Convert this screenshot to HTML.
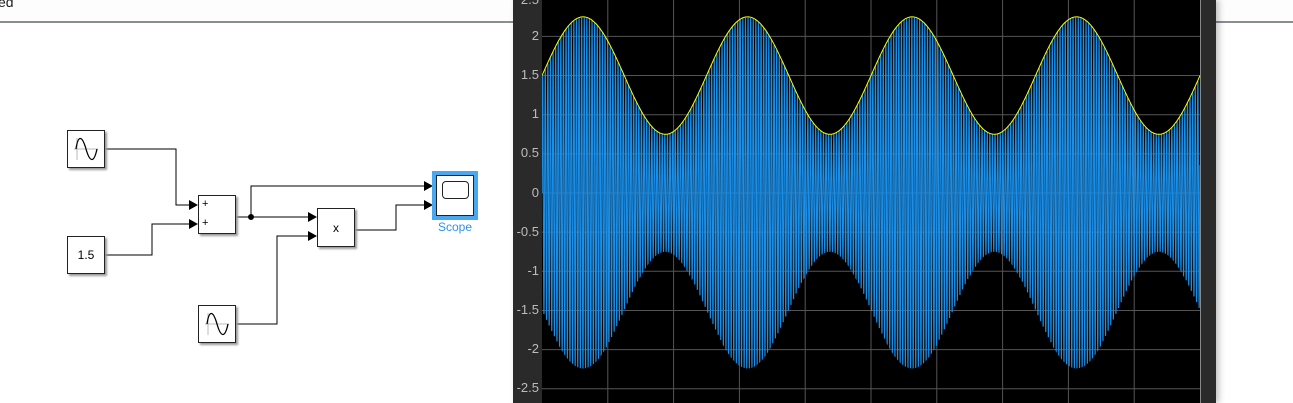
<!DOCTYPE html>
<html><head><meta charset="utf-8"><style>
body{margin:0;width:1293px;height:403px;overflow:hidden;background:#fff;font-family:"Liberation Sans",sans-serif;position:relative}
.top{position:absolute;left:0;top:0;width:1293px;height:21px;background:#fdfdfd;border-bottom:2px solid #8a8d94}
.blk{position:absolute;background:#fff;border:1px solid #222;box-shadow:2px 2px 2px #999;box-sizing:border-box;font-size:12px;display:flex;align-items:center;justify-content:center}
.frame{position:absolute;left:513px;top:0;width:703px;height:403px;background:#2a2a2a;box-shadow:3px 0 6px rgba(0,0,0,.25)}
.lab{position:absolute;color:#bcbcbc;font-size:13px;text-align:right;width:30px}
</style></head><body>
<div class="top"><span style="position:absolute;left:-2px;top:-6px;font-size:14px;color:#222">ed</span></div>
<svg width="513" height="403" style="position:absolute;left:0;top:0" fill="none" stroke="#000" stroke-width="1">
<polyline points="105,149 176,149 176,205 190,205"/>
<polyline points="105,255 152,255 152,224 190,224"/>
<polyline points="236,217 309,217"/>
<polyline points="251,217 251,186 424,186"/>
<polyline points="236,324 277,324 277,236 309,236"/>
<polyline points="355,230 396,230 396,205 424,205"/>
<circle cx="251" cy="217" r="2.5" fill="#000"/>
<g fill="#000" stroke="none">
<polygon points="189,200 198,205 189,210"/><polygon points="189,219 198,224 189,229"/>
<polygon points="308,212 317,217 308,222"/><polygon points="308,231 317,236 308,241"/>
<polygon points="424,181 433,186 424,191"/><polygon points="424,200 433,205 424,210"/>
</g>
</svg>
<div class="blk" style="left:67px;top:130px;width:38px;height:38px"><svg width="30" height="30"><path d="M3 15H27M6 4V26" stroke="#bbb"/><path d="M5 15C7 1 11 1 15 15S23 29 26 15" stroke="#000" stroke-width="1.3" fill="none"/></svg></div>
<div class="blk" style="left:67px;top:236px;width:38px;height:38px">1.5</div>
<div class="blk" style="left:198px;top:195px;width:38px;height:39px;justify-content:flex-start;align-items:flex-start"><span style="position:absolute;left:3px;top:2px;font-size:11px">+</span><span style="position:absolute;left:3px;top:21px;font-size:11px">+</span></div>
<div class="blk" style="left:317px;top:208px;width:38px;height:39px">x</div>
<div class="blk" style="left:198px;top:305px;width:38px;height:38px"><svg width="30" height="30"><path d="M3 15H27M6 4V26" stroke="#bbb"/><path d="M5 15C7 1 11 1 15 15S23 29 26 15" stroke="#000" stroke-width="1.3" fill="none"/></svg></div>
<div style="position:absolute;left:432px;top:171px;width:46px;height:49px;background:#4aa8f0"></div>
<div class="blk" style="left:436px;top:175px;width:38px;height:41px;box-shadow:none"><div style="position:absolute;left:5px;top:5px;width:25px;height:16px;border:1.5px solid #222;border-radius:4px"></div></div>
<div style="position:absolute;left:425px;top:220px;width:60px;text-align:center;color:#2d8fef;font-size:12px">Scope</div>
<div class="frame"></div>
<div class="lab" style="left:509px;top:-8px">2.5</div>
<div class="lab" style="left:509px;top:28px">2</div>
<div class="lab" style="left:509px;top:67px">1.5</div>
<div class="lab" style="left:509px;top:106px">1</div>
<div class="lab" style="left:509px;top:145px">0.5</div>
<div class="lab" style="left:509px;top:185px">0</div>
<div class="lab" style="left:509px;top:224px">-0.5</div>
<div class="lab" style="left:509px;top:263px">-1</div>
<div class="lab" style="left:509px;top:302px">-1.5</div>
<div class="lab" style="left:509px;top:341px">-2</div>
<div class="lab" style="left:509px;top:380px">-2.5</div>
<svg id="p" width="658" height="403" style="position:absolute;left:542px;top:0;background:#000"></svg>
<div style="position:absolute;left:1200px;top:0;width:1px;height:403px;background:#888"></div>
<script>
var s=document.getElementById('p'),h='';
for(var i=1;i<10;i++){var x=i*65.8;h+='<line x1="'+x+'" y1="0" x2="'+x+'" y2="403" stroke="#555"/>';}
for(var v=-2.5;v<=2.5;v+=0.5){var y=193-v*78.3;h+='<line x1="0" y1="'+y+'" x2="658" y2="'+y+'" stroke="#555"/>';}
var P=164.5,c='',e='';
for(var x=0;x<=658;x+=0.1){var env=1.5+0.75*Math.sin(2*Math.PI*x/P);var val=env*Math.sin(2*Math.PI*x/2.6);c+=x.toFixed(2)+','+(193-val*78.3).toFixed(2)+' ';}
for(var x=0;x<=658;x+=1){var env=1.5+0.75*Math.sin(2*Math.PI*x/P);e+=x+','+(193-env*78.3).toFixed(2)+' ';}
h+='<polyline points="'+c+'" fill="none" stroke="#1c8ee6" stroke-width="1.1"/>';
h+='<polyline points="'+e+'" fill="none" stroke="#ffff00" stroke-width="1"/>';
s.innerHTML=h;
</script>
</body></html>
